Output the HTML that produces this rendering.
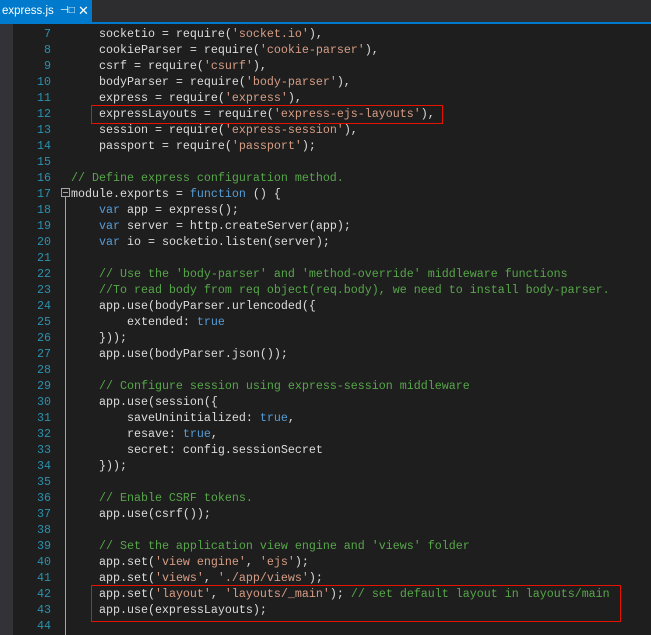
<!DOCTYPE html>
<html><head><meta charset="utf-8"><style>
*{margin:0;padding:0;box-sizing:border-box}
body{width:651px;height:635px;background:#1e1e1e;overflow:hidden;position:relative;font-family:"Liberation Sans",sans-serif}
#bar{position:absolute;left:0;top:0;width:651px;height:22px;background:#2d2d30}
#line{position:absolute;left:0;top:22px;width:651px;height:2px;background:#007acc}
#tab{position:absolute;left:0;top:0;width:92px;height:22px;background:#007acc;color:#fff;font-size:11.5px;line-height:22px;padding-left:2px}
#tab .pin{position:absolute;left:60px;top:0;font-size:10px}
#tab .x{position:absolute;left:78px;top:0;font-size:13px}
#strip{position:absolute;left:0;top:24px;width:13px;height:611px;background:#333337}
.code{position:absolute;top:26px;font-family:"Liberation Mono",monospace;font-size:11.67px;line-height:16px;white-space:pre;color:#dcdcdc}
#nums{left:13px;width:38px;text-align:right;color:#2b91af}
#src{left:71px}
.k{color:#569cd6}.s{color:#d69d85}.c{color:#57a64a}
.box{position:absolute;border:1px solid #e51400}
#fold{position:absolute;left:61px;top:188px;width:9px;height:9px;border:1px solid #a5a5a5}
#fold:after{content:"";position:absolute;left:1px;top:3px;width:5px;height:1px;background:#a5a5a5}
#vl{position:absolute;left:65px;top:197px;width:1px;height:438px;background:#a5a5a5}
#sep{position:absolute;left:52px;top:24px;width:1px;height:611px;background:#2a2a2a}
</style></head><body>
<div id="bar"></div><div id="line"></div>
<div id="tab">express.js<span class="pin">⊣□</span><span class="x">✕</span></div>
<div id="strip"></div>
<div class="code" id="nums">7
8
9
10
11
12
13
14
15
16
17
18
19
20
21
22
23
24
25
26
27
28
29
30
31
32
33
34
35
36
37
38
39
40
41
42
43
44</div>
<div id="fold"></div><div id="vl"></div>
<div class="code" id="src">    socketio = require(<span class="s">'socket.io'</span>),
    cookieParser = require(<span class="s">'cookie-parser'</span>),
    csrf = require(<span class="s">'csurf'</span>),
    bodyParser = require(<span class="s">'body-parser'</span>),
    express = require(<span class="s">'express'</span>),
    expressLayouts = require(<span class="s">'express-ejs-layouts'</span>),
    session = require(<span class="s">'express-session'</span>),
    passport = require(<span class="s">'passport'</span>);

<span class="c">// Define express configuration method.</span>
module.exports = <span class="k">function</span> () {
    <span class="k">var</span> app = express();
    <span class="k">var</span> server = http.createServer(app);
    <span class="k">var</span> io = socketio.listen(server);

    <span class="c">// Use the 'body-parser' and 'method-override' middleware functions</span>
    <span class="c">//To read body from req object(req.body), we need to install body-parser.</span>
    app.use(bodyParser.urlencoded({
        extended: <span class="k">true</span>
    }));
    app.use(bodyParser.json());

    <span class="c">// Configure session using express-session middleware</span>
    app.use(session({
        saveUninitialized: <span class="k">true</span>,
        resave: <span class="k">true</span>,
        secret: config.sessionSecret
    }));

    <span class="c">// Enable CSRF tokens.</span>
    app.use(csrf());

    <span class="c">// Set the application view engine and 'views' folder</span>
    app.set(<span class="s">'view engine'</span>, <span class="s">'ejs'</span>);
    app.set(<span class="s">'views'</span>, <span class="s">'./app/views'</span>);
    app.set(<span class="s">'layout'</span>, <span class="s">'layouts/_main'</span>); <span class="c">// set default layout in layouts/main</span>
    app.use(expressLayouts);
</div>
<div class="box" style="left:91px;top:105px;width:352px;height:19px"></div>
<div class="box" style="left:91px;top:585px;width:530px;height:37px"></div>
</body></html>
